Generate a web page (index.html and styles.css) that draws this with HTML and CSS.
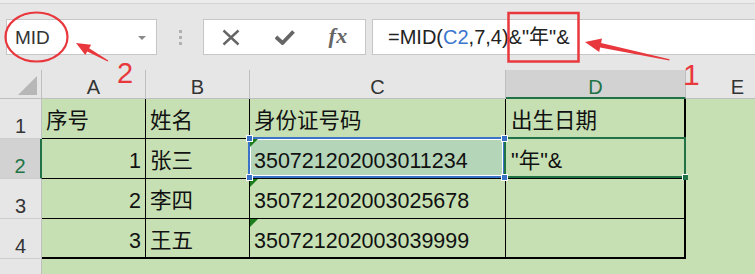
FILE: index.html
```html
<!DOCTYPE html>
<html lang="zh-CN">
<head>
<meta charset="utf-8">
<title>Excel MID</title>
<link rel="stylesheet" href="styles.css">
</head>
<body>
<div class="app">
  <div class="topstrip"></div>
  <div class="fbar">
    <div class="namebox"><span class="name">MID</span><span class="dd"></span></div>
    <div class="grip"><i></i><i></i><i></i></div>
    <div class="btns">
      <span class="btn"><svg width="18" height="17" viewBox="0 0 18 17"><path d="M1.5 1.5 L16.5 15.5 M16.5 1.5 L1.5 15.5" stroke="#666" stroke-width="2.4" fill="none"/></svg></span>
      <span class="btn"><svg width="20" height="15" viewBox="0 0 20 15"><path d="M1 7 L7.5 13 L18.5 1.5" stroke="#666" stroke-width="3.8" fill="none"/></svg></span>
      <span class="btn fx">fx</span>
    </div>
    <div class="formula">=MID(<span class="ref">C2</span>,7,4)&amp;"年"&amp;</div>
  </div>

  <div class="sheet">
    <div class="corner"><svg width="19" height="19" viewBox="0 0 19 19"><polygon points="19,0 19,19 0,19" fill="#b7b7b7"/></svg></div>
    <div class="ch">A</div>
    <div class="ch">B</div>
    <div class="ch">C</div>
    <div class="ch sel">D</div>
    <div class="ch">E</div>

    <div class="rh">1</div>
    <div class="c">序号</div>
    <div class="c">姓名</div>
    <div class="c">身份证号码</div>
    <div class="c dcol">出生日期</div>
    <div class="e"></div>

    <div class="rh sel">2</div>
    <div class="c num">1</div>
    <div class="c">张三</div>
    <div class="c tri refsel">350721202003011234<span class="refbox"></span><i class="h tl"></i><i class="h tr"></i><i class="h bl"></i><i class="h br"></i></div>
    <div class="c dcol">"年"&amp;<span class="active"></span><i class="fill"></i></div>
    <div class="e"></div>

    <div class="rh">3</div>
    <div class="c num">2</div>
    <div class="c">李四</div>
    <div class="c tri">350721202003025678</div>
    <div class="c dcol"></div>
    <div class="e"></div>

    <div class="rh">4</div>
    <div class="c num bot">3</div>
    <div class="c bot">王五</div>
    <div class="c tri bot">350721202003039999</div>
    <div class="c dcol bot"></div>
    <div class="e"></div>

    <div class="rh">5</div>
    <div class="row5"></div>
  </div>

  <svg class="annot" width="755" height="274" viewBox="0 0 755 274">
    <ellipse cx="36.5" cy="37" rx="31" ry="24.5" fill="none" stroke="#e8383d" stroke-width="2.2"/>
    <polygon points="76,43 91.1,44.7 89.2,48.2 108.3,60.6 107.7,61.4 87.2,51.6 85.3,55.1" fill="#e8383d"/>
    <text x="117" y="83" class="anum">2</text>
    <rect x="508.5" y="13" width="70" height="48.5" fill="none" stroke="#e8383d" stroke-width="2.5"/>
    <polygon points="585,42 602,38.5 601.1,43.1 669.6,59.3 669.3,60.5 600.1,47.5 599.2,52.1" fill="#e8383d"/>
    <text x="683" y="85" class="anum big">1</text>
  </svg>
</div>
</body>
</html>
```

FILE: styles.css
```css
* { box-sizing: border-box; }
html, body { margin: 0; padding: 0; }
body {
  width: 755px;
  height: 274px;
  overflow: hidden;
  background: #e6e6e6;
  font-family: "Liberation Sans", "Noto Sans CJK SC", sans-serif;
  color: #222;
}
.app { position: relative; width: 755px; height: 274px; overflow: hidden; }

.topstrip { height: 4px; background: #ececec; border-bottom: 1px solid #d4d4d4; }

.fbar { display: flex; height: 36px; margin-top: 15px; }
.namebox {
  width: 151px;
  margin-left: 6px;
  background: #fff;
  border: 1px solid #c6c6c6;
  display: flex;
  align-items: center;
  justify-content: space-between;
  padding: 1px 10px 0 8px;
}
.name { font-size: 19px; line-height: 1; color: #333; }
.dd {
  width: 0; height: 0;
  border-left: 4px solid transparent;
  border-right: 4px solid transparent;
  border-top: 4px solid #8a8a8a;
}
.grip {
  width: 46px;
  display: flex;
  flex-direction: column;
  align-items: center;
  justify-content: center;
  gap: 3px;
}
.grip i { display: block; width: 3px; height: 3px; background: #b0b0b0; }
.btns {
  width: 163px;
  background: #fff;
  border: 1px solid #c6c6c6;
  display: flex;
}
.btn {
  width: 54px;
  display: flex;
  align-items: center;
  justify-content: center;
  color: #666;
}
.fx {
  font-family: "Liberation Serif", serif;
  font-style: italic;
  font-weight: bold;
  font-size: 22px;
  letter-spacing: 0.5px;
  padding-bottom: 2px;
}
.formula {
  flex: 1;
  margin-left: 6px;
  background: #fff;
  border: 1px solid #c6c6c6;
  border-right: none;
  padding: 1px 0 0 15px;
  font-size: 20px;
  line-height: 33px;
  color: #222;
  white-space: nowrap;
}
.ref { color: #3a76cf; }

.sheet {
  display: grid;
  grid-template-columns: 42px 104px 104px 256px 180px 104px;
  grid-template-rows: 29px 40px 40px 40px 40px 40px;
  margin-top: 15px;
  width: 790px;
}
.corner {
  background: #e6e6e6;
  border-right: 1px solid #bfbfbf;
  border-bottom: 1px solid #bfbfbf;
  display: flex;
  justify-content: flex-end;
  align-items: flex-end;
  padding: 0 4px 3px 0;
}
.ch {
  background: #e6e6e6;
  border-right: 1px solid #bfbfbf;
  border-bottom: 1px solid #bfbfbf;
  display: flex;
  align-items: flex-end;
  justify-content: center;
  font-size: 20px;
  line-height: 1;
  padding-bottom: 1px;
  color: #333;
}
.ch.sel {
  background: #d2d2d2;
  color: #217346;
  border-bottom: 2px solid #217346;
  padding-bottom: 0;
}
.rh {
  background: #e6e6e6;
  border-right: 1px solid #bfbfbf;
  border-bottom: 1px solid #cdcdcd;
  display: flex;
  align-items: flex-end;
  justify-content: center;
  font-size: 20px;
  line-height: 1;
  padding-bottom: 2px;
  color: #333;
}
.rh.sel {
  background: #d2d2d2;
  color: #217346;
  border-right: 2px solid #217346;
}

.c {
  position: relative;
  background: #c6e0b4;
  border-right: 1px solid #000;
  border-bottom: 1px solid #000;
  display: flex;
  align-items: flex-end;
  padding: 0 4px 6px 4px;
  font-size: 21.5px;
  line-height: 1;
  color: #111;
  white-space: nowrap;
}
.c.num { justify-content: flex-end; }
.c.dcol { border-right: 2px solid #000; padding-left: 5px; }
.c.bot { border-bottom: 2px solid #000; padding-bottom: 5px; }
.e { background: #c6e0b4; }
.row5 { grid-column: 2 / span 5; background: #c6e0b4; }

.c.tri::before {
  content: "";
  position: absolute;
  top: 0;
  left: 0;
  border-top: 8px solid #1b7d1b;
  border-right: 8px solid transparent;
  z-index: 3;
}
.c.refsel { background: #b5d5b8; }
.refbox {
  position: absolute;
  top: -2px; left: -2px; right: 0; bottom: 0;
  border: 2px solid #3a72c8;
  box-shadow: inset 0 0 0 1px #fff;
  z-index: 2;
}
.h {
  position: absolute;
  width: 7px;
  height: 7px;
  background: #3a72c8;
  border: 1px solid #fff;
  z-index: 5;
}
.h.tl { top: -4px; left: -4px; }
.h.tr { top: -4px; right: -3px; }
.h.bl { bottom: -3px; left: -4px; }
.h.br { bottom: -3px; right: -3px; }
.active {
  position: absolute;
  top: -2px; left: -2px; right: -2px; bottom: 0;
  border: 2px solid #217346;
  z-index: 4;
}
.fill {
  position: absolute;
  right: -4px;
  bottom: -2px;
  width: 6px;
  height: 6px;
  background: #217346;
  border-left: 1px solid #fff;
  border-top: 1px solid #fff;
  z-index: 5;
}

.annot { position: absolute; top: 0; left: 0; z-index: 10; pointer-events: none; }
.anum { font-family: "Liberation Sans", sans-serif; font-size: 29px; fill: #e8383d; }
.anum.big { font-size: 30px; }
```
